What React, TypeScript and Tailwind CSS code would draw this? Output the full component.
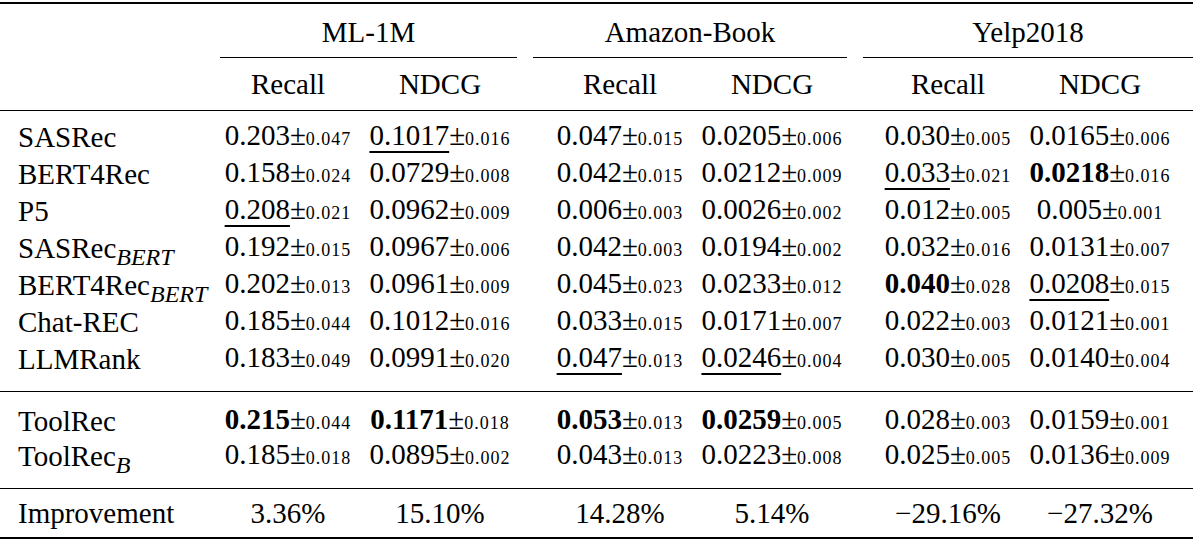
import React from "react";

type Cell = { v: string; s: string; b?: boolean; u?: boolean };

const W = [
  "w-[216px] pl-[18px] justify-start",
  "w-[144px] justify-center",
  "w-[160px] justify-center",
  "w-[10px]",
  "w-[180px] justify-center",
  "w-[124px] justify-center",
  "w-[22px]",
  "w-[184px] justify-center",
  "w-[120px] justify-center",
];

function Val({ c }: { c: Cell }) {
  const main = c.b
    ? "font-bold"
    : c.u
    ? "underline decoration-[1.5px] underline-offset-[6px]"
    : "";
  return (
    <span className="whitespace-nowrap">
      <span className={main}>{c.v}</span>
      <span>±</span>
      <span className="text-[18px] tracking-[1px]">{c.s}</span>
    </span>
  );
}

function Label({ name, sub }: { name: string; sub?: string }) {
  return (
    <span className="whitespace-nowrap">
      {name}
      {sub && (
        <span className="italic text-[24px] align-[-7px] leading-[0]">{sub}</span>
      )}
    </span>
  );
}

function Row({
  label,
  cells,
  h,
}: {
  label: React.ReactNode;
  cells: React.ReactNode[];
  h: string;
}) {
  const items: React.ReactNode[] = [
    label,
    cells[0],
    cells[1],
    null,
    cells[2],
    cells[3],
    null,
    cells[4],
    cells[5],
  ];
  return (
    <div className={`flex ${h}`}>
      {items.map((it, i) => (
        <div key={i} className={`flex items-center shrink-0 whitespace-nowrap ${W[i]}`}>
          {it}
        </div>
      ))}
    </div>
  );
}

const P = (v: string, s: string, b = false, u = false): Cell => ({ v, s, b, u });

const data: { name: string; sub?: string; cells: Cell[] }[] = [
  {
    name: "SASRec",
    cells: [
      P("0.203", "0.047"),
      P("0.1017", "0.016", false, true),
      P("0.047", "0.015"),
      P("0.0205", "0.006"),
      P("0.030", "0.005"),
      P("0.0165", "0.006"),
    ],
  },
  {
    name: "BERT4Rec",
    cells: [
      P("0.158", "0.024"),
      P("0.0729", "0.008"),
      P("0.042", "0.015"),
      P("0.0212", "0.009"),
      P("0.033", "0.021", false, true),
      P("0.0218", "0.016", true),
    ],
  },
  {
    name: "P5",
    cells: [
      P("0.208", "0.021", false, true),
      P("0.0962", "0.009"),
      P("0.006", "0.003"),
      P("0.0026", "0.002"),
      P("0.012", "0.005"),
      P("0.005", "0.001"),
    ],
  },
  {
    name: "SASRec",
    sub: "BERT",
    cells: [
      P("0.192", "0.015"),
      P("0.0967", "0.006"),
      P("0.042", "0.003"),
      P("0.0194", "0.002"),
      P("0.032", "0.016"),
      P("0.0131", "0.007"),
    ],
  },
  {
    name: "BERT4Rec",
    sub: "BERT",
    cells: [
      P("0.202", "0.013"),
      P("0.0961", "0.009"),
      P("0.045", "0.023"),
      P("0.0233", "0.012"),
      P("0.040", "0.028", true),
      P("0.0208", "0.015", false, true),
    ],
  },
  {
    name: "Chat-REC",
    cells: [
      P("0.185", "0.044"),
      P("0.1012", "0.016"),
      P("0.033", "0.015"),
      P("0.0171", "0.007"),
      P("0.022", "0.003"),
      P("0.0121", "0.001"),
    ],
  },
  {
    name: "LLMRank",
    cells: [
      P("0.183", "0.049"),
      P("0.0991", "0.020"),
      P("0.047", "0.013", false, true),
      P("0.0246", "0.004", false, true),
      P("0.030", "0.005"),
      P("0.0140", "0.004"),
    ],
  },
];

const ours: { name: string; sub?: string; cells: Cell[] }[] = [
  {
    name: "ToolRec",
    cells: [
      P("0.215", "0.044", true),
      P("0.1171", "0.018", true),
      P("0.053", "0.013", true),
      P("0.0259", "0.005", true),
      P("0.028", "0.003"),
      P("0.0159", "0.001"),
    ],
  },
  {
    name: "ToolRec",
    sub: "B",
    cells: [
      P("0.185", "0.018"),
      P("0.0895", "0.002"),
      P("0.043", "0.013"),
      P("0.0223", "0.008"),
      P("0.025", "0.005"),
      P("0.0136", "0.009"),
    ],
  },
];

export default function App() {
  return (
    <div className="w-[1196px] h-[544px] bg-white text-black font-['Liberation_Serif',serif] text-[29px] leading-[33px] overflow-hidden">
      <div className="h-[2px]" />
      <div className="w-[1193px] h-[2px] bg-black" />
      {/* group header */}
      <div className="flex h-[53px] pt-[3px]">
        <div className="w-[220px] shrink-0" />
        <div className="w-[297px] shrink-0 flex items-center justify-center">ML-1M</div>
        <div className="w-[16px] shrink-0" />
        <div className="w-[314px] shrink-0 flex items-center justify-center">Amazon-Book</div>
        <div className="w-[16px] shrink-0" />
        <div className="w-[330px] shrink-0 flex items-center justify-center">Yelp2018</div>
      </div>
      {/* cmidrules */}
      <div className="flex h-[1px]">
        <div className="w-[220px] shrink-0" />
        <div className="w-[297px] shrink-0 bg-black" />
        <div className="w-[16px] shrink-0" />
        <div className="w-[314px] shrink-0 bg-black" />
        <div className="w-[16px] shrink-0" />
        <div className="w-[330px] shrink-0 bg-black" />
      </div>
      <Row
        h="h-[52px]"
        label={null}
        cells={["Recall", "NDCG", "Recall", "NDCG", "Recall", "NDCG"]}
      />
      <div className="w-[1193px] h-[1px] bg-black" />
      <div className="pt-[8px] pb-[13px]">
        {data.map((r, i) => (
          <Row
            key={i}
            h="h-[37px]"
            label={<Label name={r.name} sub={r.sub} />}
            cells={r.cells.map((c, j) => (
              <Val key={j} c={c} />
            ))}
          />
        ))}
      </div>
      <div className="w-[1193px] h-[1px] bg-black" />
      <div className="pt-[12px] pb-[14px]">
        {ours.map((r, i) => (
          <Row
            key={i}
            h="h-[35px]"
            label={<Label name={r.name} sub={r.sub} />}
            cells={r.cells.map((c, j) => (
              <Val key={j} c={c} />
            ))}
          />
        ))}
      </div>
      <div className="w-[1193px] h-[1px] bg-black" />
      <Row
        h="h-[48px]"
        label={<span>Improvement</span>}
        cells={["3.36%", "15.10%", "14.28%", "5.14%", "−29.16%", "−27.32%"]}
      />
      <div className="w-[1193px] h-[2px] bg-black" />
    </div>
  );
}
